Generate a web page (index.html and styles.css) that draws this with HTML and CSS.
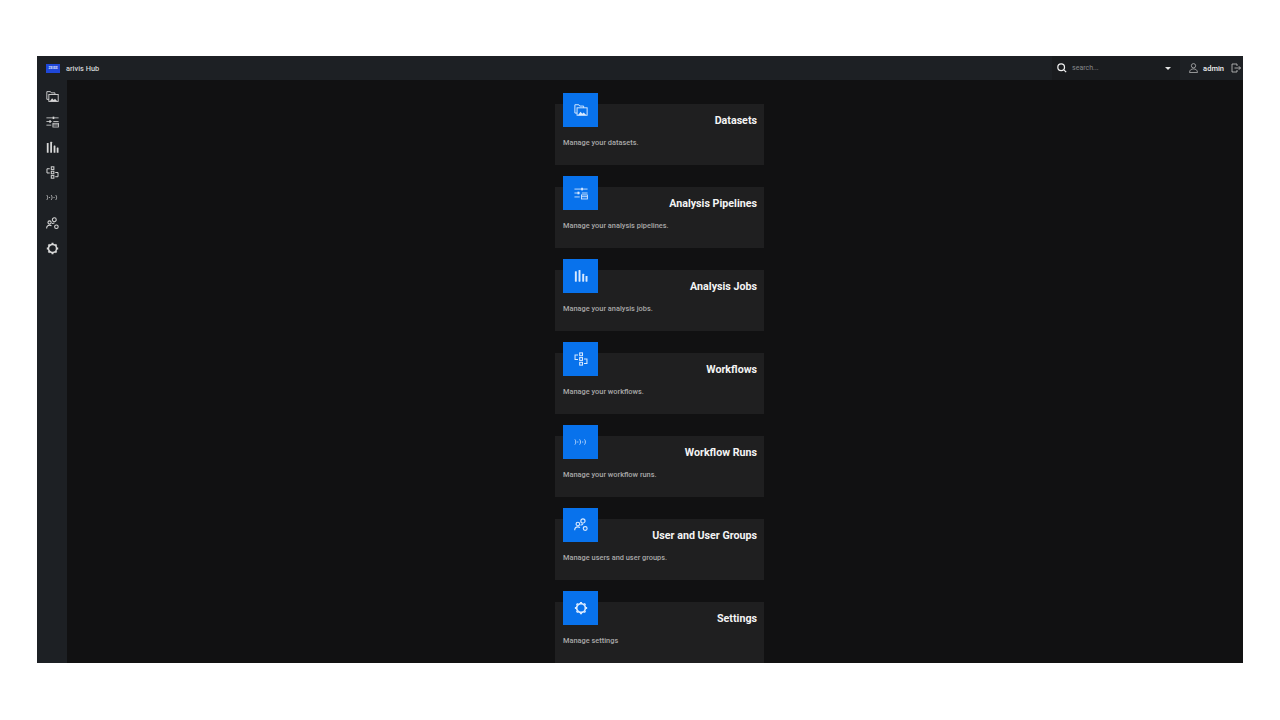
FILE: index.html
```html
<!DOCTYPE html>
<html lang="en">
<head>
    <meta charset="UTF-8">
    <meta name="viewport" content="width=device-width, initial-scale=1.0">
    <title>arivis Hub</title>
    <link rel="stylesheet" href="styles.css">
</head>
<body>
    <svg class="icon-defs" width="0" height="0">
        <symbol id="i-datasets" viewBox="0 0 16 16" fill="none" stroke="currentColor" stroke-width="1.1">
            <path d="M3.5 11.5H1V2h4.5l1 1.5H11V5.500"/>
            <rect x="3.5" y="5.5" width="11.5" height="8.5"/>
            <path d="M4.5 14l3-4 2 2.2 1.6-1.4 3 3.2z" fill="currentColor" stroke="none"/>
        </symbol>
        <symbol id="i-pipelines" viewBox="0 0 16 16" fill="none" stroke="currentColor" stroke-width="1">
            <path d="M0.5 3.5h15M0.5 8h6.5M9 8h6.5M0.5 12.5h6"/>
            <rect x="8.2" y="2" width="2" height="3" fill="currentColor" stroke="none"/>
            <rect x="4" y="6.5" width="2" height="3" fill="currentColor" stroke="none"/>
            <rect x="8.5" y="10.2" width="6.8" height="4.6"/>
            <path d="M8.5 12.2h6.8"/>
        </symbol>
        <symbol id="i-jobs" viewBox="0 0 16 16" fill="currentColor">
            <rect x="1" y="2.5" width="2.2" height="12" rx="0.5"/>
            <rect x="5.2" y="1" width="2.2" height="13.5" rx="0.5"/>
            <rect x="9.4" y="5.5" width="2.2" height="9" rx="0.5"/>
            <rect x="13.2" y="8" width="2.2" height="6.5" rx="0.5"/>
        </symbol>
        <symbol id="i-workflows" viewBox="0 0 16 16" fill="none" stroke="currentColor" stroke-width="1.2">
            <rect x="6.5" y="1" width="3.2" height="3.2"/>
            <rect x="6.5" y="6.4" width="3.2" height="3.2"/>
            <rect x="6.5" y="11.8" width="3.2" height="3.2"/>
            <path d="M4.6 3.4H1.2v5.2h3.4"/>
            <path d="M11.4 8h3.4v5.2h-3.4"/>
        </symbol>
        <symbol id="i-runs" viewBox="0 0 16 16" fill="none" stroke="currentColor" stroke-width="0.9">
            <path d="M1 5c1.4 1.6 1.4 4.4 0 6"/>
            <path d="M6.4 5c1.4 1.6 1.4 4.4 0 6"/>
            <path d="M12 5c1.4 1.6 1.4 4.4 0 6"/>
            <path d="M3.6 8h1.4M9.2 8h1.4"/>
        </symbol>
        <symbol id="i-users" viewBox="0 0 16 16" fill="none" stroke="currentColor" stroke-width="1.3">
            <circle cx="4.4" cy="6.8" r="2"/>
            <circle cx="10.2" cy="3.4" r="2.4"/>
            <path d="M0.8 14c0-2.4 1.4-3.8 3.6-3.8 1 0 1.8 0.3 2.4 0.8"/>
            <path d="M7.4 8.2c0.8-0.5 1.8-0.8 3-0.8"/>
            <circle cx="12.8" cy="12" r="2.2"/>
        </symbol>
        <symbol id="i-settings" viewBox="0 0 16 16" fill="none" stroke="currentColor">
            <circle cx="8" cy="8" r="5" stroke-width="1.9"/>
            <path d="M8 1v1.500M8 13.500V15M1 8h1.500M13.500 8H15M3 3l1.100 1.100M11.900 11.900L13 13M13 3l-1.100 1.100M4.100 11.900L3 13" stroke-width="2.400"/>
        </symbol>
    </svg>

    <div class="app">
        <header class="topbar">
            <div class="brand">
                <span class="logo">ZEISS</span>
                <span class="app-name">arivis Hub</span>
            </div>
            <div class="topbar-right">
                <div class="search">
                    <svg class="search-icon" width="10" height="10" viewBox="0 0 12 12" fill="none" stroke="currentColor" stroke-width="1.5">
                        <circle cx="5" cy="5" r="4"/>
                        <path d="M8.5 8.5l2.5 2.5"/>
                    </svg>
                    <span class="search-text">search...</span>
                    <span class="caret"></span>
                </div>
                <div class="user">
                    <svg width="9" height="10" viewBox="0 0 10 11" fill="none" stroke="currentColor" stroke-width="0.7">
                        <circle cx="5" cy="3" r="2.4"/>
                        <path d="M0.6 10.5c0-2.8 2-4 4.4-4s4.4 1.2 4.4 4z"/>
                    </svg>
                    <span class="user-name">admin</span>
                </div>
                <svg class="logout" width="10" height="10" viewBox="0 0 10 10" fill="none" stroke="currentColor" stroke-width="0.8">
                    <path d="M6 3V1H1v8h5V7"/>
                    <path d="M3.5 5H9.5M7.8 3.2L9.5 5 7.8 6.8"/>
                </svg>
            </div>
        </header>

        <div class="content">
            <nav class="sidebar">
                <div class="nav-item"><svg class="nav-icon"><use href="#i-datasets"/></svg></div>
                <div class="nav-item"><svg class="nav-icon"><use href="#i-pipelines"/></svg></div>
                <div class="nav-item"><svg class="nav-icon"><use href="#i-jobs"/></svg></div>
                <div class="nav-item"><svg class="nav-icon"><use href="#i-workflows"/></svg></div>
                <div class="nav-item"><svg class="nav-icon"><use href="#i-runs"/></svg></div>
                <div class="nav-item"><svg class="nav-icon"><use href="#i-users"/></svg></div>
                <div class="nav-item"><svg class="nav-icon"><use href="#i-settings"/></svg></div>
            </nav>

            <main class="main">
                <section class="card">
                    <div class="card-head">
                        <div class="tile"><svg class="tile-icon"><use href="#i-datasets"/></svg></div>
                        <h2>Datasets</h2>
                    </div>
                    <p>Manage your datasets.</p>
                </section>
                <section class="card">
                    <div class="card-head">
                        <div class="tile"><svg class="tile-icon"><use href="#i-pipelines"/></svg></div>
                        <h2>Analysis Pipelines</h2>
                    </div>
                    <p>Manage your analysis pipelines.</p>
                </section>
                <section class="card">
                    <div class="card-head">
                        <div class="tile"><svg class="tile-icon"><use href="#i-jobs"/></svg></div>
                        <h2>Analysis Jobs</h2>
                    </div>
                    <p>Manage your analysis jobs.</p>
                </section>
                <section class="card">
                    <div class="card-head">
                        <div class="tile"><svg class="tile-icon"><use href="#i-workflows"/></svg></div>
                        <h2>Workflows</h2>
                    </div>
                    <p>Manage your workflows.</p>
                </section>
                <section class="card">
                    <div class="card-head">
                        <div class="tile"><svg class="tile-icon"><use href="#i-runs"/></svg></div>
                        <h2>Workflow Runs</h2>
                    </div>
                    <p>Manage your workflow runs.</p>
                </section>
                <section class="card">
                    <div class="card-head">
                        <div class="tile"><svg class="tile-icon"><use href="#i-users"/></svg></div>
                        <h2>User and User Groups</h2>
                    </div>
                    <p>Manage users and user groups.</p>
                </section>
                <section class="card">
                    <div class="card-head">
                        <div class="tile"><svg class="tile-icon"><use href="#i-settings"/></svg></div>
                        <h2>Settings</h2>
                    </div>
                    <p>Manage settings</p>
                </section>
            </main>
        </div>
    </div>
</body>
</html>
```

FILE: styles.css
```css
* {
    margin: 0;
    padding: 0;
    box-sizing: border-box;
}

html,
body {
    height: 720px;
    overflow: hidden;
}

body {
    background-color: #fff;
    font-family: Roboto, "Liberation Sans", sans-serif;
    padding: 56px 37px 57px;
}

.icon-defs {
    display: block;
    position: absolute;
}

.app {
    height: 607px;
    display: flex;
    flex-direction: column;
    background-color: #111112;
    overflow: hidden;
}

.topbar {
    height: 24px;
    flex: none;
    display: flex;
    align-items: center;
    justify-content: space-between;
    background-color: #1d2024;
}

.brand {
    display: flex;
    align-items: center;
    padding-left: 9px;
}

.logo {
    width: 14px;
    height: 9px;
    background-color: #1f47d8;
    color: #dfe6ff;
    font-size: 3.4px;
    font-weight: 700;
    line-height: 9px;
    text-align: center;
}

.app-name {
    margin-left: 6px;
    color: #d4d6d8;
    font-size: 7.4px;
    font-weight: 500;
}

.topbar-right {
    display: flex;
    align-items: center;
    height: 100%;
}

.search {
    width: 128px;
    height: 100%;
    display: flex;
    align-items: center;
    padding: 0 9px 0 5px;
    background-color: #1a1c1f;
    color: #f0f0f0;
}

.search-text {
    margin-left: 5px;
    color: #85888b;
    font-size: 7px;
}

.caret {
    margin-left: auto;
    border-left: 3px solid transparent;
    border-right: 3px solid transparent;
    border-top: 3px solid #e6e6e6;
}

.user {
    display: flex;
    align-items: center;
    gap: 5px;
    margin-left: 9px;
    color: #d8d8d8;
}

.user-name {
    color: #f0f0f0;
    font-size: 7.5px;
    font-weight: 500;
}

.logout {
    margin: 0 2px 0 7px;
    color: #c8c8c8;
}

.content {
    flex: 1;
    min-height: 0;
    display: flex;
}

.sidebar {
    width: 30px;
    flex: none;
    padding-top: 4px;
    background-color: #1d2024;
}

.nav-item {
    height: 25.3px;
    display: flex;
    align-items: center;
    justify-content: center;
    color: #d8d8d8;
}

.nav-icon {
    width: 13px;
    height: 13px;
}

.main {
    flex: 1;
    display: flex;
    flex-direction: column;
    align-items: center;
    gap: 22px;
    padding: 24px 0 0 9px;
    overflow: hidden;
}

.card {
    width: 209px;
    height: 61px;
    flex: none;
    padding: 0 7px 0 8px;
    background-color: #1f1f20;
}

.card-head {
    display: flex;
    align-items: center;
    justify-content: space-between;
    height: 23px;
}

.tile {
    width: 35px;
    height: 34px;
    flex: none;
    align-self: flex-start;
    margin-top: -11px;
    display: flex;
    align-items: center;
    justify-content: center;
    background-color: #0872ec;
    color: #d8e9ff;
}

.tile-icon {
    width: 14px;
    height: 14px;
}

.card h2 {
    margin-top: 9px;
    color: #f4f4f4;
    font-size: 10.7px;
    font-weight: 700;
}

.card p {
    margin-top: 11px;
    color: #a9a9a9;
    font-size: 7.4px;
    font-weight: 500;
}
```
